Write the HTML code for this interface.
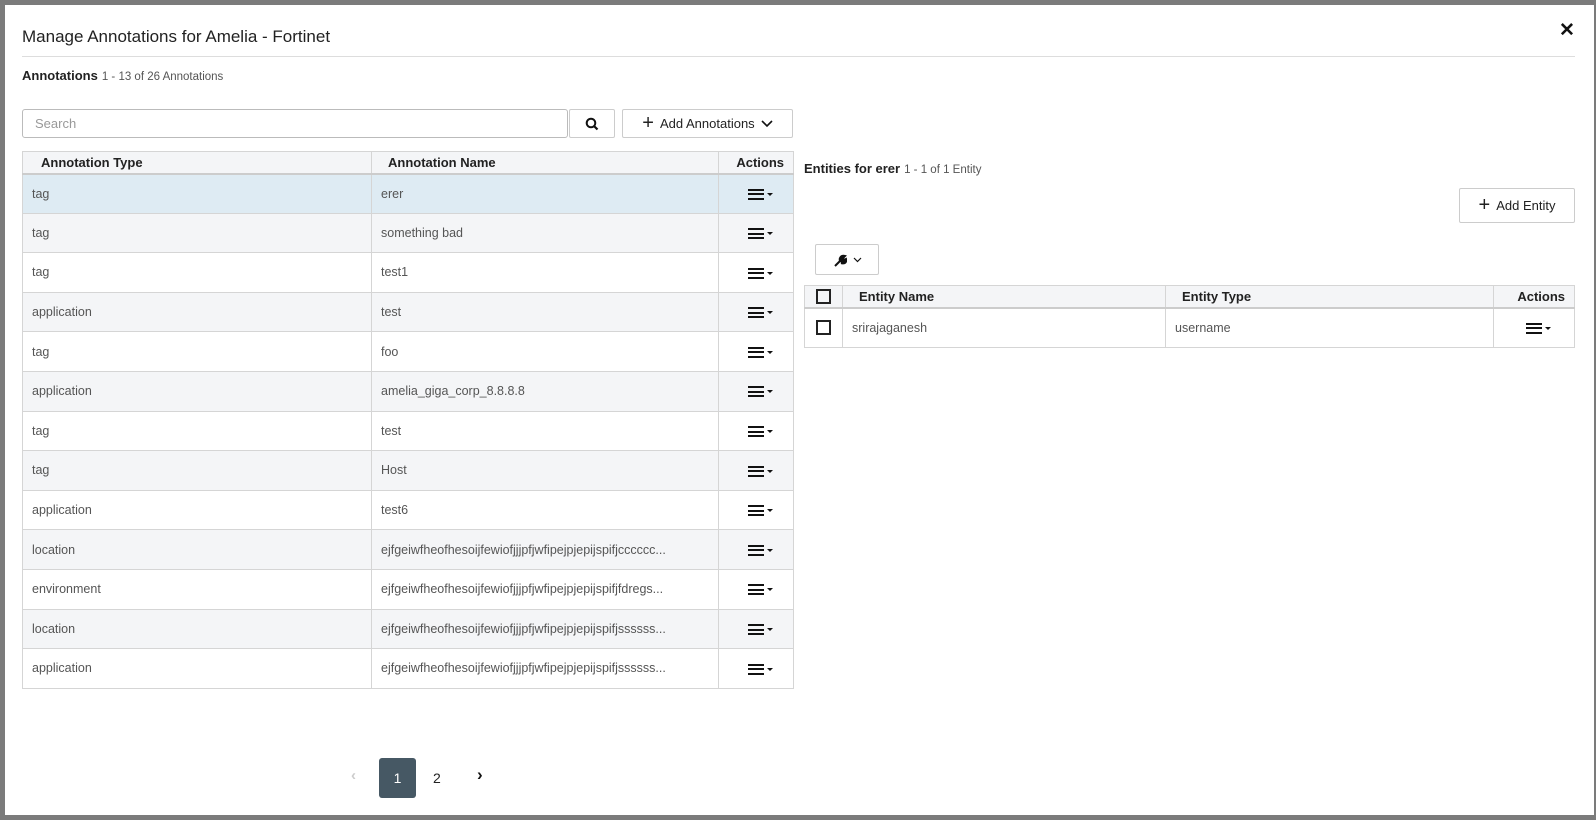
<!DOCTYPE html>
<html><head><meta charset="utf-8"><style>
*{box-sizing:border-box;margin:0;padding:0}
body{width:1596px;height:820px;background:#7b7b7b;font-family:"Liberation Sans",sans-serif;color:#333;position:relative;overflow:hidden}
.modal{position:absolute;left:5px;top:5px;width:1589px;height:810px;background:#fff}
.a{position:absolute}
.title{left:17px;top:22px;font-size:17px;color:#222}
.hr{left:17px;top:51px;width:1553px;height:1px;background:#ddd}
.close{left:1554px;top:14px;font-size:19px;font-weight:bold;color:#111}
.sub{font-size:13px;font-weight:bold;color:#222}
.sub span{font-weight:normal;font-size:11.5px;color:#555;margin-left:4px}
.btn{border:1px solid #ccc;border-radius:2px;background:#fff;font-size:13px;color:#222;display:flex;align-items:center;justify-content:center}
table{border-collapse:collapse;position:absolute;font-size:13px}
td,th{border:1px solid #d5d5d5;padding:0 9px;text-align:left;white-space:nowrap;overflow:hidden}
th{background:#f4f5f7;font-weight:bold;color:#222;height:22px;border-bottom:2px solid #ccc}
td{height:39.6px;color:#555;font-size:12.5px}
tr.alt td{background:#f4f5f7}
tr.sel td{background:#deebf3}
.menu{display:inline-block;width:16px;height:11px;border-top:2px solid #111;border-bottom:2px solid #111;position:relative;vertical-align:middle}
.menu:before{content:"";position:absolute;left:0;top:2.5px;width:16px;height:2px;background:#111}
.menu:after{content:"";position:absolute;left:19px;top:2px;border:3px solid transparent;border-top:3px solid #111}
.cb{display:inline-block;width:15px;height:15px;border:2px solid #222;vertical-align:middle}
</style></head><body>
<div class="modal">
<div class="a title">Manage Annotations for Amelia - Fortinet</div>
<div class="a close">✕</div>
<div class="a hr"></div>
<div class="a sub" style="left:17px;top:63px">Annotations<span>1 - 13 of 26 Annotations</span></div>
<div class="a" style="left:17px;top:104px;width:546px;height:29px;border:1px solid #bbb;border-radius:3px;font-size:13px;color:#999;padding:6px 12px">Search</div>
<div class="a btn" style="left:564px;top:104px;width:46px;height:29px"><svg width="14" height="14" viewBox="0 0 14 14"><circle cx="6" cy="6" r="4.3" stroke="#111" stroke-width="2" fill="none"/><path d="M9 9l3.5 3.5" stroke="#111" stroke-width="2.2"/></svg></div>
<div class="a btn" style="left:617px;top:104px;width:171px;height:29px"><span style="font-size:20px;margin-right:6px;font-weight:300">+</span>Add Annotations <svg width="12" height="8" style="margin-left:6px"><path d="M1 1l5 5 5-5" stroke="#111" stroke-width="1.6" fill="none"/></svg></div>
<table style="left:17px;top:146px;width:772px">
<tr><th style="width:349px;padding-left:18px">Annotation Type</th><th style="width:347px;padding-left:16px">Annotation Name</th><th style="text-align:right;padding-right:9px">Actions</th></tr>
<tr class="sel"><td>tag</td><td>erer</td><td style="text-align:center"><i class="menu"></i></td></tr>
<tr class="alt"><td>tag</td><td>something bad</td><td style="text-align:center"><i class="menu"></i></td></tr>
<tr><td>tag</td><td>test1</td><td style="text-align:center"><i class="menu"></i></td></tr>
<tr class="alt"><td>application</td><td>test</td><td style="text-align:center"><i class="menu"></i></td></tr>
<tr><td>tag</td><td>foo</td><td style="text-align:center"><i class="menu"></i></td></tr>
<tr class="alt"><td>application</td><td>amelia_giga_corp_8.8.8.8</td><td style="text-align:center"><i class="menu"></i></td></tr>
<tr><td>tag</td><td>test</td><td style="text-align:center"><i class="menu"></i></td></tr>
<tr class="alt"><td>tag</td><td>Host</td><td style="text-align:center"><i class="menu"></i></td></tr>
<tr><td>application</td><td>test6</td><td style="text-align:center"><i class="menu"></i></td></tr>
<tr class="alt"><td>location</td><td>ejfgeiwfheofhesoijfewiofjjjpfjwfipejpjepijspifjcccccc...</td><td style="text-align:center"><i class="menu"></i></td></tr>
<tr><td>environment</td><td>ejfgeiwfheofhesoijfewiofjjjpfjwfipejpjepijspifjfdregs...</td><td style="text-align:center"><i class="menu"></i></td></tr>
<tr class="alt"><td>location</td><td>ejfgeiwfheofhesoijfewiofjjjpfjwfipejpjepijspifjssssss...</td><td style="text-align:center"><i class="menu"></i></td></tr>
<tr><td>application</td><td>ejfgeiwfheofhesoijfewiofjjjpfjwfipejpjepijspifjssssss...</td><td style="text-align:center"><i class="menu"></i></td></tr>
</table>
<div class="a sub" style="left:799px;top:156px">Entities for erer<span>1 - 1 of 1 Entity</span></div>
<div class="a btn" style="left:1454px;top:183px;width:116px;height:35px"><span style="font-size:20px;margin-right:6px;font-weight:300">+</span>Add Entity</div>
<div class="a btn" style="left:810px;top:239px;width:64px;height:31px"><svg width="14" height="14" viewBox="0 0 14 14"><path d="M2 13l6-6M7 8c-1-3 1-6 5-5l-2 2 1 2 2-1c1 4-2 5-5 4" stroke="#111" stroke-width="2" fill="#111"/></svg><svg width="9" height="6" style="margin-left:6px"><path d="M1 1l3.5 3.5L8 1" stroke="#111" stroke-width="1.2" fill="none"/></svg></div>
<table style="left:799px;top:280px;width:771px">
<tr><th style="width:38px;text-align:center;padding:0"><i class="cb"></i></th><th style="width:323px;padding-left:16px">Entity Name</th><th style="width:328px;padding-left:16px">Entity Type</th><th style="text-align:right;padding-right:9px">Actions</th></tr>
<tr><td style="text-align:center;padding:0;height:39px"><i class="cb"></i></td><td>srirajaganesh</td><td>username</td><td style="text-align:center"><i class="menu"></i></td></tr>
</table>
<div class="a" style="left:346px;top:762px;color:#ccc;font-size:15px;font-weight:bold">‹</div>
<div class="a" style="left:374px;top:753px;width:37px;height:40px;background:#465864;border-radius:3px;color:#fff;font-size:14px;text-align:center;line-height:40px">1</div>
<div class="a" style="left:428px;top:765px;font-size:14px;color:#222">2</div>
<div class="a" style="left:472px;top:760px;font-size:17px;font-weight:bold;color:#111">›</div>
</div>
</body></html>
